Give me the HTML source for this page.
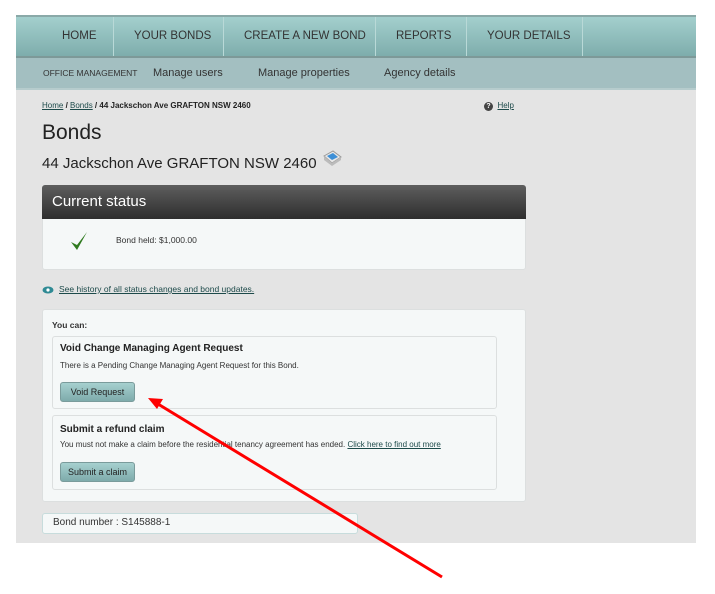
<!DOCTYPE html>
<html><head><style>
body{margin:0;width:715px;height:594px;background:#fff;position:relative;font-family:"Liberation Sans",sans-serif;overflow:hidden}
.a{position:absolute}
#wrap{left:16px;top:15px;width:680px;height:528px;background:#e4e4e4}
#nav{left:16px;top:15px;width:680px;height:43px;background:linear-gradient(#a3cfcd,#7eadac);border-top:2px solid #8aa9a8;border-bottom:2px solid #7d9998;box-sizing:border-box}
.ni{position:absolute;top:0;height:39px;line-height:39px;font-size:11.5px;color:#333;white-space:nowrap}
.dv{position:absolute;top:0;height:39px;width:1px;background:#b9d9d7}
#sub{left:16px;top:58px;width:680px;height:32px;background:#a3bfc1;border-bottom:2px solid #b6cccd;box-sizing:border-box}
.si{position:absolute;top:0;height:30px;line-height:30px;font-size:11px;color:#333}
.box{background:#f5f8f8;border:1px solid #dcdfdf;border-radius:3px;box-sizing:border-box}
.btn{position:absolute;background:linear-gradient(#a6d0cf,#7eabab);border:1px solid #7a9b9b;border-radius:3px;font-size:9px;color:#222;text-align:center;line-height:18px;height:20px;box-sizing:border-box}
u{color:#1d4a4a}
</style></head><body>
<div class="a" id="wrap"></div>
<div class="a" id="nav">
<div class="ni" style="left:46px">HOME</div><div class="dv" style="left:97px"></div>
<div class="ni" style="left:118px">YOUR BONDS</div><div class="dv" style="left:207px"></div>
<div class="ni" style="left:228px">CREATE A NEW BOND</div><div class="dv" style="left:359px"></div>
<div class="ni" style="left:380px">REPORTS</div><div class="dv" style="left:450px"></div>
<div class="ni" style="left:471px">YOUR DETAILS</div><div class="dv" style="left:566px"></div>
</div>
<div class="a" id="sub">
<div class="si" style="left:27px;font-size:8.5px">OFFICE MANAGEMENT</div>
<div class="si" style="left:137px">Manage users</div>
<div class="si" style="left:242px">Manage properties</div>
<div class="si" style="left:368px">Agency details</div>
</div>
<div class="a" style="left:42px;top:101px;font-size:8px;color:#222;font-weight:bold"><u style="font-weight:normal">Home</u> / <u style="font-weight:normal">Bonds</u> / 44 Jackschon Ave GRAFTON NSW 2460</div>
<div class="a" style="left:484px;top:101px;font-size:8px"><span style="display:inline-block;width:9px;height:9px;border-radius:50%;background:#444;color:#fff;font-size:7px;text-align:center;line-height:9px;font-weight:bold">?</span> &nbsp;<u>Help</u></div>
<div class="a" style="left:42px;top:121px;font-size:21px;color:#222">Bonds</div>
<div class="a" style="left:42px;top:155px;font-size:15px;color:#222">44 Jackschon Ave GRAFTON NSW 2460</div>
<svg class="a" style="left:321px;top:148px" width="22" height="20"><path d="M3 8 L12 3 L20 9 L11 15 Z" fill="#e8e8e8" stroke="#999"/><path d="M6 8 L12 5 L17 9 L11 12 Z" fill="#3d8fd6"/><path d="M3 8 L3 12 L11 18 L20 12 L20 9 L11 15 Z" fill="#bbb"/></svg>
<div class="a box" style="left:42px;top:185px;width:484px;height:85px"></div>
<div class="a" style="left:42px;top:185px;width:484px;height:34px;background:linear-gradient(#5e5e5e,#2e2e2e);border-radius:3px 3px 0 0"></div>
<div class="a" style="left:52px;top:193px;font-size:15px;color:#fff">Current status</div>
<svg class="a" style="left:70px;top:231px" width="18" height="20"><path d="M1 11 L7 19 L17 1 L7 14 Z" fill="#2f7a1f"/></svg>
<div class="a" style="left:116px;top:235px;font-size:8.5px;color:#333">Bond held: $1,000.00</div>
<svg class="a" style="left:42px;top:286px" width="12" height="8"><ellipse cx="6" cy="4" rx="5.5" ry="3.5" fill="#2f8a94"/><circle cx="6" cy="4" r="1.6" fill="#fff"/></svg>
<div class="a" style="left:59px;top:284px;font-size:8.5px"><u>See history of all status changes and bond updates.</u></div>
<div class="a box" style="left:42px;top:309px;width:484px;height:193px"></div>
<div class="a" style="left:52px;top:320px;font-size:8.5px;font-weight:bold;color:#333">You can:</div>
<div class="a box" style="left:52px;top:336px;width:445px;height:73px"></div>
<div class="a" style="left:60px;top:343px;font-size:10px;font-weight:bold;color:#222">Void Change Managing Agent Request</div>
<div class="a" style="left:60px;top:361px;font-size:8px;color:#333">There is a Pending Change Managing Agent Request for this Bond.</div>
<div class="btn" style="left:60px;top:382px;width:75px">Void Request</div>
<div class="a box" style="left:52px;top:415px;width:445px;height:75px"></div>
<div class="a" style="left:60px;top:424px;font-size:10px;font-weight:bold;color:#222">Submit a refund claim</div>
<div class="a" style="left:60px;top:440px;font-size:8px;color:#333">You must not make a claim before the residential tenancy agreement has ended. <u>Click here to find out more</u></div>
<div class="btn" style="left:60px;top:462px;width:75px">Submit a claim</div>
<div class="a box" style="left:42px;top:513px;width:316px;height:21px;border-color:#c7dcdc"></div>
<div class="a" style="left:53px;top:517px;font-size:10px;color:#333">Bond number : S145888-1</div>
<svg class="a" style="left:0;top:0" width="715" height="594"><line x1="442" y1="577" x2="158" y2="404" stroke="#f00" stroke-width="3"/><path d="M148 398 L163 399 L157 409 Z" fill="#f00"/></svg>
</body></html>
